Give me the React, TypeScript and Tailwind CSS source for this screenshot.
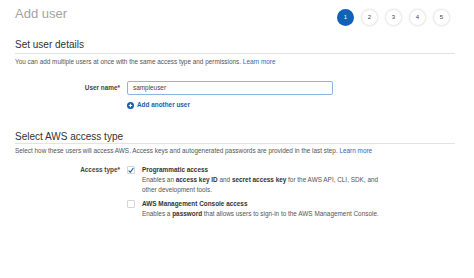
import React from "react";

const steps = [1, 2, 3, 4, 5];

const Check = () => (
  <svg width="7" height="7" viewBox="0 0 10 10" fill="none">
    <path d="M1.5 5.5 L4 8 L8.5 1.5" stroke="#1d5fa8" strokeWidth="1.8" strokeLinecap="round" strokeLinejoin="round" />
  </svg>
);

const PlusCircle = () => (
  <svg width="7" height="7" viewBox="0 0 10 10">
    <circle cx="5" cy="5" r="5" fill="#1b5ea8" />
    <path d="M5 2.5 V7.5 M2.5 5 H7.5" stroke="#fff" strokeWidth="1.6" />
  </svg>
);

const App = () => {
  return (
    <div className="w-[474px] h-[278px] bg-white overflow-hidden font-['Liberation_Sans',Arial,sans-serif] text-[#333]">
      <div className="pl-[15px] pr-[19px]">
        <div className="flex items-start justify-between pt-[6px] h-[26px]">
          <h1 className="text-[13px] leading-[16px] text-[#a3a3a3]">Add user</h1>
          <div className="flex gap-[7px] mt-[3px] mr-[5px]">
            {steps.map((s) => (
              <div
                key={s}
                className={
                  s === 1
                    ? "w-[17px] h-[17px] rounded-full bg-[#0f62b4] text-white text-[6px] flex items-center justify-center"
                    : "w-[17px] h-[17px] rounded-full bg-white border border-[#ececec] text-[#444] text-[6px] flex items-center justify-center shadow-[0_0_2px_rgba(0,0,0,0.12)]"
                }
              >
                {s}
              </div>
            ))}
          </div>
        </div>

        <h2 className="mt-[13px] text-[10px] leading-[12px] text-[#333] pb-[2px] border-b border-[#e3e3e3]">
          Set user details
        </h2>
        <p className="mt-[3px] text-[6.4px] leading-[9px] text-[#555]">
          You can add multiple users at once with the same access type and permissions.{" "}
          <a className="text-[#2b6bb5]">Learn more</a>
        </p>

        <div className="mt-[15px] flex items-center">
          <label className="w-[112px] pr-[7px] text-right font-bold text-[6.4px] text-[#444]">User name*</label>
          <div className="w-[206px] h-[14px] border border-[#8fb3df] rounded-[2px] px-[5px] flex items-center text-[6.4px] text-[#444]">
            sampleuser
          </div>
        </div>
        <div className="mt-[6px] ml-[112px] h-[8px] flex items-center gap-[3px] text-[6.4px] font-bold text-[#1b5ea8]">
          <PlusCircle />
          <span>Add another user</span>
        </div>

        <h2 className="mt-[22px] text-[10px] leading-[12px] text-[#333] border-b border-[#e3e3e3]">
          Select AWS access type
        </h2>
        <p className="mt-[2px] text-[6.4px] leading-[9px] text-[#555]">
          Select how these users will access AWS. Access keys and autogenerated passwords are provided in the last step.{" "}
          <a className="text-[#2b6bb5]">Learn more</a>
        </p>

        <div className="mt-[10px] flex items-start text-[6.4px] leading-[10px]">
          <label className="w-[112px] pr-[7px] text-right font-bold text-[#444]">Access type*</label>
          <div className="flex flex-col gap-[4px]">
            <div className="flex items-start gap-[7px]">
              <div className="mt-[1px] w-[8px] h-[8px] border border-[#d5d5d5] rounded-[1px] flex items-center justify-center">
                <Check />
              </div>
              <div className="w-[242px]">
                <div className="font-bold text-[#333]">Programmatic access</div>
                <div className="text-[#555]">
                  Enables an <b className="text-[#333]">access key ID</b> and <b className="text-[#333]">secret access key</b> for the AWS API, CLI, SDK, and other development tools.
                </div>
              </div>
            </div>
            <div className="flex items-start gap-[7px]">
              <div className="mt-[1px] w-[8px] h-[8px] border border-[#d5d5d5] rounded-[1px]" />
              <div className="w-[242px]">
                <div className="font-bold text-[#333]">AWS Management Console access</div>
                <div className="text-[#555]">
                  Enables a <b className="text-[#333]">password</b> that allows users to sign-in to the AWS Management Console.
                </div>
              </div>
            </div>
          </div>
        </div>
      </div>
    </div>
  );
};

export default App;
